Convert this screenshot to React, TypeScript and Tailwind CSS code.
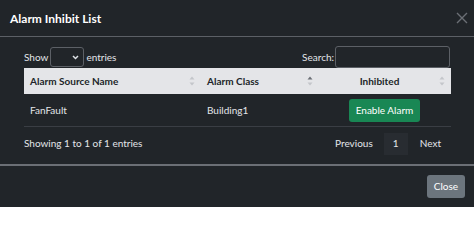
import React from "react";

function SortIcon({ active }: { active?: "up" | "down" }) {
  return (
    <svg width="6" height="10" viewBox="0 0 6 10" className="shrink-0">
      <path d="M3 0.5 L5.5 3.5 H0.5 Z" fill={active === "up" ? "#6b6f75" : "#c3c6ca"} />
      <path d="M3 9.5 L5.5 6.5 H0.5 Z" fill={active === "down" ? "#6b6f75" : "#c3c6ca"} />
    </svg>
  );
}

export default function App() {
  return (
    <div
      className="w-[474px] h-[207px] bg-[#212529] text-[#e3e6e9] overflow-hidden flex flex-col"
      style={{ fontFamily: 'Lato, "Noto Sans", sans-serif' }}
    >
      {/* Header */}
      <div className="h-[37px] shrink-0 flex items-center justify-between pl-[10px] pr-[6px] border-b border-[#5c6066]">
        <div className="text-[12px] font-bold text-white pt-[1px]">Alarm Inhibit List</div>
        <svg width="12" height="12" viewBox="0 0 12 12">
          <path d="M1 1 L11 11 M11 1 L1 11" stroke="#6b6f75" strokeWidth="1.4" />
        </svg>
      </div>

      {/* Body */}
      <div className="flex-1 px-[24px] pt-[9px] text-[10px]">
        <div className="h-[22px] flex items-center justify-between">
          <div className="flex items-center gap-[2px]">
            <span>Show</span>
            <div className="w-[34px] h-[20px] border border-[#5c6066] rounded-[3px] flex items-center justify-end pr-[4px]">
              <svg width="7" height="5" viewBox="0 0 7 5">
                <path d="M1 1 L3.5 3.5 L6 1" stroke="#dee2e6" strokeWidth="1.5" fill="none" />
              </svg>
            </div>
            <span>entries</span>
          </div>
          <div className="flex items-center gap-[1px]">
            <span>Search:</span>
            <div className="w-[115px] h-[22px] border border-[#5c6066] rounded-[3px]" />
          </div>
        </div>

        {/* Table */}
        <div className="w-[427px]">
          <div className="h-[26px] bg-[#e4e5e8] text-[#212529] font-bold flex items-center">
            <div className="w-[176px] pl-[6px] pr-[5px] flex items-center justify-between">
              <span>Alarm Source Name</span>
              <SortIcon />
            </div>
            <div className="w-[120px] pl-[7px] pr-[7px] flex items-center justify-between">
              <span>Alarm Class</span>
              <SortIcon active="up" />
            </div>
            <div className="flex-1 pr-[6px] flex items-center">
              <span className="flex-1 text-center">Inhibited</span>
              <SortIcon />
            </div>
          </div>
          <div className="h-[33px] flex items-center border-b border-[#3a3e44]">
            <div className="w-[176px] pl-[6px]">FanFault</div>
            <div className="w-[120px] pl-[7px]">Building1</div>
            <div className="flex-1 flex justify-center pr-[2px]">
              <button className="h-[23px] w-[71px] rounded-[3px] bg-[#198754] text-white text-[10px]">
                Enable Alarm
              </button>
            </div>
          </div>
          <div className="h-[33px] flex items-center justify-between">
            <span>Showing 1 to 1 of 1 entries</span>
            <div className="flex items-center">
              <span className="pr-[11px]">Previous</span>
              <div className="w-[24px] h-[22px] bg-[#282c31] flex items-center justify-center">1</div>
              <span className="pl-[12px] pr-[10px]">Next</span>
            </div>
          </div>
        </div>
      </div>

      {/* Footer */}
      <div className="h-[43px] shrink-0 border-t-2 border-[#6b6f75] flex items-center justify-end pr-[9px]">
        <button className="w-[38px] h-[23px] rounded-[3px] bg-[#6c757d] text-white text-[10px]">Close</button>
      </div>
    </div>
  );
}
